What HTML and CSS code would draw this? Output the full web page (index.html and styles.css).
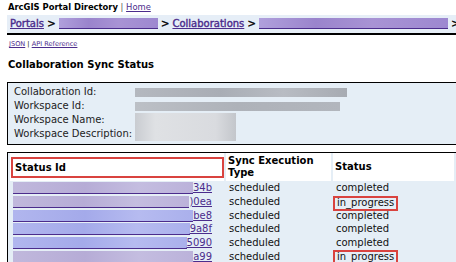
FILE: index.html
```html
<!DOCTYPE html>
<html lang="en">
<head>
    <meta charset="UTF-8">
    <title>Collaboration Sync Status</title>
    <link rel="stylesheet" href="styles.css">
</head>
<body>
    <div class="title"><b>ArcGIS Portal Directory</b> | <a href="#">Home</a></div>
    <div class="crumbs">
        <a href="#">Portals</a> &gt;
        <a href="#" class="blur b1"></a> &gt;
        <a href="#">Collaborations</a> &gt;
        <a href="#" class="blur b2"></a> &gt;
    </div>
    <div class="help"><a href="#">JSON</a> | <a href="#">API Reference</a></div>

    <h2>Collaboration Sync Status</h2>

    <table class="box info">
        <tr><td class="lbl">Collaboration Id:</td><td><span class="val v1"></span></td></tr>
        <tr><td class="lbl">Workspace Id:</td><td><span class="val v2"></span></td></tr>
        <tr><td class="lbl">Workspace Name:</td><td><span class="val v3"></span></td></tr>
        <tr><td class="lbl">Workspace Description:</td><td><span class="val v3"></span></td></tr>
    </table>

    <table class="box list">
        <tr class="head">
            <th class="c1"><span class="mark wide">Status Id</span></th>
            <th class="c2">Sync Execution<br>Type</th>
            <th class="c3">Status</th>
        </tr>
        <tr><td class="c1"><a href="#"><span class="blur p"></span>34b</a></td><td>scheduled</td><td>completed</td></tr>
        <tr><td class="c1"><a href="#"><span class="blur p"></span>)0ea</a></td><td>scheduled</td><td><span class="mark">in_progress</span></td></tr>
        <tr><td class="c1"><a href="#"><span class="blur q"></span>be8</a></td><td>scheduled</td><td>completed</td></tr>
        <tr><td class="c1"><a href="#"><span class="blur q"></span>9a8f</a></td><td>scheduled</td><td>completed</td></tr>
        <tr><td class="c1"><a href="#"><span class="blur q"></span>5090</a></td><td>scheduled</td><td>completed</td></tr>
        <tr><td class="c1"><a href="#"><span class="blur p"></span>a99</a></td><td>scheduled</td><td><span class="mark">in_progress</span></td></tr>
    </table>
</body>
</html>
```

FILE: styles.css
```css
* {
    margin: 0;
    padding: 0;
    box-sizing: border-box;
}
body {
    font-family: "DejaVu Sans", Verdana, sans-serif;
    font-size: 10px;
    color: #000;
    background: #fff;
    padding: 2px 0 0 7px;
}
a {
    color: #4b2c8c;
}
.title {
    font-size: 8.4px;
    line-height: 11px;
    padding-left: 1px;
    color: #555;
}
.title b {
    color: #000;
}
.crumbs {
    margin-top: 2px;
    height: 20px;
    line-height: 18px;
    background: #e6eef7;
    border-bottom: 2px solid #000;
    padding-left: 3px;
    font-size: 10px;
    -webkit-text-stroke: 0.4px currentColor;
    white-space: nowrap;
    overflow: hidden;
}
.crumbs .blur {
    display: inline-block;
    height: 11px;
    vertical-align: -2px;
    border-bottom: 1px solid #4b2c8c;
    background: linear-gradient(90deg, #b0a0dc, #9a84cc 30%, #a893d4 60%, #9d88d0);
}
.crumbs .b1 { width: 99px; }
.crumbs .b2 { width: 189px; }
.help {
    font-size: 6.6px;
    line-height: 8px;
    margin-top: 5px;
    padding-left: 2px;
}
h2 {
    font-size: 10px;
    margin: 11px 0 0 1px;
    line-height: 12px;
}
.box {
    border: 1px solid #000;
    border-right: none;
    background: #e5eef6;
    width: 449px;
    border-collapse: separate;
}
.info {
    margin-top: 11px;
    padding: 2px 0 3px 6px;
    border-spacing: 0;
}
.info td {
    height: 14px;
    line-height: 14px;
    white-space: nowrap;
    color: #222;
    vertical-align: middle;
}
.info .lbl {
    width: 121px;
}
.val {
    display: block;
    height: 9px;
}
.v1 { width: 212px; background: linear-gradient(90deg, #b4b8bf, #a9adb5 40%, #b8bcc3 70%, #a7abb2); }
.v2 { width: 205px; background: linear-gradient(90deg, #bcc0c6, #aeb2b9 50%, #b2b6bd); }
.v3 { width: 101px; height: 14px; background: linear-gradient(90deg, #c9ccd1, #dfe1e4 20%, #d9dbdf 80%, #c3c6cb); }
.list {
    margin-top: 7px;
    border-spacing: 2px 0;
    table-layout: fixed;
}
.list th {
    text-align: left;
    background: #fff;
    line-height: 12px;
    padding: 2px 0 2px 2px;
    vertical-align: middle;
}
.list .c1 { width: 214px; }
.list .c2 { width: 105px; }
.list td {
    line-height: 13.6px;
    height: 13.6px;
    padding: 0 0 0 3px;
    white-space: nowrap;
    color: #111;
}
.list td.c1 {
    padding: 0 12px 0 3px;
}
.list td.c1 a {
    display: flex;
    align-items: center;
}
.list .blur {
    flex: 1;
    height: 12px;
    margin-top: 1px;
    border-bottom: 1px solid #4b2c8c;
}
.list .p { background: linear-gradient(90deg, #c0b8dc, #b6acd6 40%, #c4bde0 70%, #bbb2da); }
.list .q { background: linear-gradient(90deg, #b1b6ee, #a4aaea 40%, #b6bbf0 70%, #aab0ec); }
.mark {
    display: inline-block;
    outline: 2px solid #d9433f;
    height: 11px;
    line-height: 10px;
    padding: 0 2px;
    margin-left: -1px;
    vertical-align: -1px;
}
.mark.wide {
    display: block;
    width: 209px;
    height: 17px;
    line-height: 17px;
    padding: 0 2px;
    margin: 0 0 0 1px;
}
```
